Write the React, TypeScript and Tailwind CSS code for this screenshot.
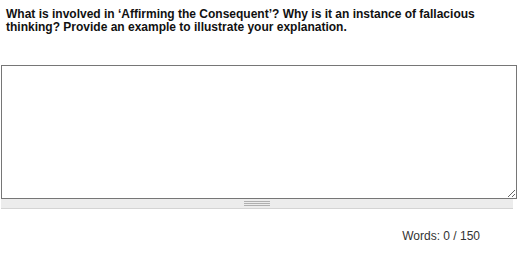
export default function App() {
  return (
    <div className="w-[530px] h-[261px] bg-white font-['Liberation_Sans',Arial,sans-serif] text-black">
      <div className="pl-[6px] pt-[8px] pr-[40px] text-[12px] leading-[13px] font-bold text-[#111]">
        What is involved in ‘Affirming the Consequent’? Why is it an instance of fallacious thinking? Provide an example to illustrate your explanation.
      </div>
      <div className="mt-[31px] ml-px w-[516px]">
        <textarea className="block w-full h-[134px] border border-[#767676] bg-white resize-y outline-none" />
        <div className="h-[10px] w-[512px] bg-[#ececec] border-b border-[#d4d4d4] flex items-center justify-center">
          <div className="flex flex-col gap-[1px] w-[26px]">
            <div className="h-px bg-[#b0b0b0]" />
            <div className="h-px bg-[#b0b0b0]" />
            <div className="h-px bg-[#b0b0b0]" />
          </div>
        </div>
      </div>
      <div className="flex justify-end pr-[50px] pt-[20px] text-[12px] leading-[14px] text-[#333]">
        Words: 0 / 150
      </div>
    </div>
  );
}
